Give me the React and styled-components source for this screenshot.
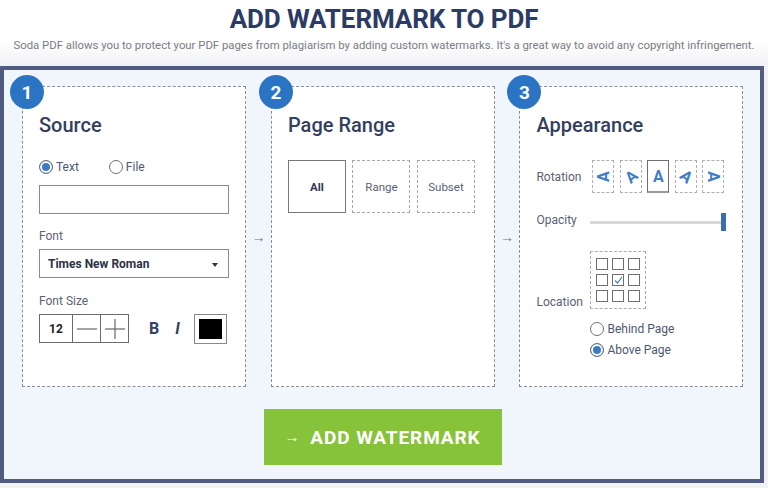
import styled, { createGlobalStyle } from "styled-components";

const GlobalStyle = createGlobalStyle`
  html, body {
    margin: 0;
    padding: 0;
  }
  body {
    font-family: Roboto, "Liberation Sans", Arial, sans-serif;
    background: linear-gradient(#ffffff 0, #ffffff 40px, #f1f2f4 66px, #f1f2f4 100%);
    width: 768px;
    height: 488px;
    overflow: hidden;
  }
`;

const Page = styled.div`
  display: flex;
  flex-direction: column;
  align-items: center;
`;

const Title = styled.h1`
  margin: 4px 0 0;
  font-size: 26px;
  line-height: 30px;
  font-weight: 700;
  color: #2c3a66;
  letter-spacing: -0.1px;
`;

const Subtitle = styled.p`
  margin: 4px 0 0;
  font-size: 11.35px;
  line-height: 14px;
  color: #7a7d84;
  white-space: nowrap;
`;

const Frame = styled.div`
  box-sizing: border-box;
  align-self: flex-start;
  width: 764px;
  margin-top: 14px;
  border: 4px solid #505b81;
  background: #f1f6fd;
  padding: 16px 17px 14px 18px;
  display: flex;
  flex-direction: column;
  align-items: center;
`;

const Steps = styled.div`
  display: flex;
  align-items: center;
  align-self: stretch;
`;

const Arrow = styled.div`
  width: 25px;
  text-align: center;
  color: #4f7dbe;
  font-size: 14px;
`;

const Card = styled.div`
  position: relative;
  box-sizing: border-box;
  width: 224px;
  height: 301px;
  background: #fff;
  border: 1px dashed #8a8d96;
  padding: 26px 16px 0 16px;
`;

const Badge = styled.div`
  position: absolute;
  left: -13px;
  top: -12px;
  width: 34px;
  height: 34px;
  border-radius: 50%;
  background: #2b74c4;
  color: #fff;
  font-size: 19px;
  font-weight: 700;
  display: flex;
  align-items: center;
  justify-content: center;
`;

const CardTitle = styled.h2`
  margin: 0;
  font-size: 20px;
  line-height: 24px;
  font-weight: 500;
  color: #343f5f;
`;

const RadioRow = styled.div`
  display: flex;
  gap: ${(p) => p.gap || 0}px;
  margin-top: ${(p) => p.top || 0}px;
  flex-direction: ${(p) => (p.column ? "column" : "row")};
`;

const RadioLabel = styled.label`
  display: flex;
  align-items: center;
  gap: 3px;
  height: 16px;
  font-size: 12px;
  color: #4e5770;
`;

const RadioDot = styled.span`
  box-sizing: border-box;
  width: 14px;
  height: 14px;
  border-radius: 50%;
  border: 1.5px solid #6d6f75;
  background: ${(p) => (p.checked ? "#3d7ac3" : "#fff")};
  box-shadow: ${(p) => (p.checked ? "inset 0 0 0 2px #fff" : "none")};
`;

const TextInput = styled.div`
  box-sizing: border-box;
  margin-top: 10px;
  width: 190px;
  height: 29px;
  border: 1px solid #8a8a8a;
  background: #fff;
`;

const FieldLabel = styled.div`
  margin-top: ${(p) => p.top}px;
  font-size: 12px;
  line-height: 14px;
  color: #5c6274;
`;

const Select = styled.div`
  box-sizing: border-box;
  margin-top: 6px;
  width: 190px;
  height: 29px;
  border: 1px solid #8a8a8a;
  display: flex;
  align-items: center;
  justify-content: space-between;
  padding: 0 10px 0 8px;
  font-size: 12px;
  font-weight: 700;
  color: #2c3246;
`;

const Caret = styled.span`
  width: 0;
  height: 0;
  border-left: 3.5px solid transparent;
  border-right: 3.5px solid transparent;
  border-top: 4px solid #333;
  margin-top: 2px;
`;

const SizeRow = styled.div`
  margin-top: 6px;
  display: flex;
  align-items: center;
  height: 29px;
`;

const SizeBox = styled.div`
  box-sizing: border-box;
  width: ${(p) => p.w}px;
  height: 29px;
  border: 1px solid #6c6c6c;
  margin-left: ${(p) => (p.first ? 0 : -1)}px;
  display: flex;
  align-items: center;
  justify-content: center;
  font-size: 12px;
  font-weight: 700;
  color: #222;
`;

const StyleBtn = styled.span`
  margin-left: ${(p) => p.ml}px;
  font-size: 16px;
  font-weight: 700;
  font-style: ${(p) => (p.italic ? "italic" : "normal")};
  color: #344266;
`;

const ColorBox = styled.div`
  box-sizing: border-box;
  margin-left: 14px;
  width: 33px;
  height: 30px;
  border: 1px solid #888;
  padding: 4px;
  background: #fff;
  div {
    width: 100%;
    height: 100%;
    background: #000;
  }
`;

const RangeRow = styled.div`
  margin-top: 23px;
  display: flex;
  gap: 6.5px;
`;

const RangeBtn = styled.div`
  box-sizing: border-box;
  width: 58px;
  height: 53px;
  border: 1px ${(p) => (p.active ? "solid #777" : "dashed #a7a7a7")};
  display: flex;
  align-items: center;
  justify-content: center;
  font-size: 11.5px;
  font-weight: ${(p) => (p.active ? 700 : 400)};
  color: ${(p) => (p.active ? "#2c3653" : "#5b6275")};
`;

const OptRow = styled.div`
  display: flex;
  align-items: ${(p) => p.align || "center"};
  margin-top: ${(p) => p.top}px;
`;

const OptLabel = styled.div`
  width: 54px;
  flex-shrink: 0;
  font-size: 12px;
  line-height: 14px;
  color: #5a6173;
`;

const RotRow = styled.div`
  display: flex;
  gap: 5.5px;
  margin-left: 2px;
`;

const RotBox = styled.div`
  box-sizing: border-box;
  width: 22px;
  height: 33px;
  border: 1px ${(p) => (p.active ? "solid #6f6f6f" : "dashed #b0b0b0")};
  border-bottom: ${(p) => (p.active ? "2px solid #9a9a9a" : "1px dashed #b0b0b0")};
  display: flex;
  align-items: center;
  justify-content: center;
  span {
    display: block;
    font-size: 16px;
    font-weight: 700;
    color: #3f7dc6;
    transform: rotate(${(p) => p.deg}deg);
  }
`;

const Slider = styled.div`
  position: relative;
  flex: 1;
  height: 18px;
  display: flex;
  align-items: center;
`;

const Track = styled.div`
  height: 3px;
  width: 100%;
  background: #d9d9d9;
`;

const Thumb = styled.div`
  position: absolute;
  right: 0;
  top: 0;
  width: 5px;
  height: 18px;
  background: #3b6db4;
`;

const Grid = styled.div`
  box-sizing: border-box;
  width: 56px;
  height: 58px;
  border: 1px dashed #ababab;
  display: grid;
  grid-template-columns: repeat(3, 12px);
  grid-auto-rows: 12px;
  gap: 4px 4px;
  align-content: center;
  justify-content: center;
`;

const Cell = styled.div`
  box-sizing: border-box;
  border: 1.5px solid #707070;
  display: flex;
  align-items: center;
  justify-content: center;
`;

const AddButton = styled.button`
  margin-top: 22px;
  width: 238px;
  height: 56px;
  border: none;
  background: #86c23a;
  color: #fff;
  font-family: Roboto, "Liberation Sans", Arial, sans-serif;
  font-size: 19px;
  font-weight: 700;
  letter-spacing: 0.9px;
  display: flex;
  align-items: center;
  justify-content: center;
  gap: 10px;
  span {
    font-size: 15px;
  }
`;

const rotations = [-90, -40, 0, 40, 90];

export default function App() {
  return (
    <>
      <GlobalStyle />
      <Page>
        <Title>ADD WATERMARK TO PDF</Title>
        <Subtitle>
          Soda PDF allows you to protect your PDF pages from plagiarism by adding custom watermarks. It's a great way to avoid any copyright infringement.
        </Subtitle>
        <Frame>
          <Steps>
            <Card>
              <Badge>1</Badge>
              <CardTitle>Source</CardTitle>
              <RadioRow gap={30} top={22}>
                <RadioLabel><RadioDot checked /> Text</RadioLabel>
                <RadioLabel><RadioDot /> File</RadioLabel>
              </RadioRow>
              <TextInput />
              <FieldLabel top={15}>Font</FieldLabel>
              <Select>
                Times New Roman
                <Caret />
              </Select>
              <FieldLabel top={16}>Font Size</FieldLabel>
              <SizeRow>
                <SizeBox w={34} first>12</SizeBox>
                <SizeBox w={29}>
                  <svg width="20" height="2" viewBox="0 0 20 2"><line x1="0" y1="1" x2="20" y2="1" stroke="#666" strokeWidth="1.2" /></svg>
                </SizeBox>
                <SizeBox w={29}>
                  <svg width="20" height="20" viewBox="0 0 20 20"><line x1="0" y1="10" x2="20" y2="10" stroke="#666" strokeWidth="1.2" /><line x1="10" y1="0" x2="10" y2="20" stroke="#666" strokeWidth="1.2" /></svg>
                </SizeBox>
                <StyleBtn ml={20}>B</StyleBtn>
                <StyleBtn ml={16} italic>I</StyleBtn>
                <ColorBox><div /></ColorBox>
              </SizeRow>
            </Card>
            <Arrow>→</Arrow>
            <Card>
              <Badge>2</Badge>
              <CardTitle>Page Range</CardTitle>
              <RangeRow>
                <RangeBtn active>All</RangeBtn>
                <RangeBtn>Range</RangeBtn>
                <RangeBtn>Subset</RangeBtn>
              </RangeRow>
            </Card>
            <Arrow>→</Arrow>
            <Card>
              <Badge>3</Badge>
              <CardTitle>Appearance</CardTitle>
              <OptRow top={23}>
                <OptLabel>Rotation</OptLabel>
                <RotRow>
                  {rotations.map((d) => (
                    <RotBox key={d} deg={d} active={d === 0}><span>A</span></RotBox>
                  ))}
                </RotRow>
              </OptRow>
              <OptRow top={20} align="flex-start">
                <OptLabel>Opacity</OptLabel>
                <Slider>
                  <Track />
                  <Thumb />
                </Slider>
              </OptRow>
              <OptRow top={20} align="flex-end">
                <OptLabel>Location</OptLabel>
                <Grid>
                  {Array.from({ length: 9 }).map((_, i) => (
                    <Cell key={i}>
                      {i === 4 && (
                        <svg width="9" height="8" viewBox="0 0 9 8"><path d="M1 4.5 L3.5 7 L8 1" fill="none" stroke="#4b84c8" strokeWidth="1.2" /></svg>
                      )}
                    </Cell>
                  ))}
                </Grid>
              </OptRow>
              <OptRow top={12}>
                <OptLabel />
                <RadioRow column gap={5}>
                  <RadioLabel><RadioDot /> Behind Page</RadioLabel>
                  <RadioLabel><RadioDot checked /> Above Page</RadioLabel>
                </RadioRow>
              </OptRow>
            </Card>
          </Steps>
          <AddButton>
            <span>→</span> ADD WATERMARK
          </AddButton>
        </Frame>
      </Page>
    </>
  );
}
